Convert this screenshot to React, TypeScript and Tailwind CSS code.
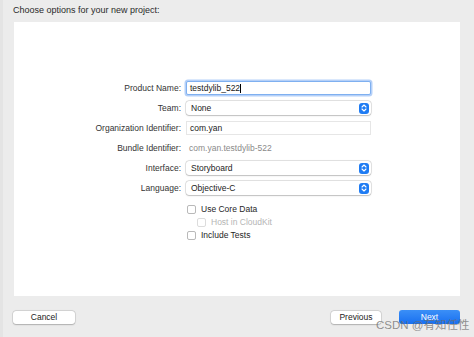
const font = { fontFamily: '"Liberation Sans", "Noto Sans CJK SC", sans-serif' };

const Stepper = () => (
	<div className="w-[10px] h-[11px] rounded-[3px] bg-[#1f7cf3] flex items-center justify-center">
		<svg width="6" height="8" viewBox="0 0 6 8" fill="none">
			<path d="M1 3 L3 1 L5 3" stroke="white" strokeWidth="1.1" strokeLinecap="round" strokeLinejoin="round" />
			<path d="M1 5 L3 7 L5 5" stroke="white" strokeWidth="1.1" strokeLinecap="round" strokeLinejoin="round" />
		</svg>
	</div>
);

const Popup = ({ value }: { value: string }) => (
	<div className="h-[14px] w-[185px] rounded-[3px] bg-white shadow-[0_0_0_0.5px_rgba(0,0,0,0.18),0_0.5px_1.5px_rgba(0,0,0,0.18)] flex items-center justify-between pl-[5px] pr-[2px] text-[8.5px] text-[#222]">
		<span>{value}</span>
		<Stepper />
	</div>
);

const Check = ({ label, disabled }: { label: string; disabled?: boolean }) => (
	<div className="h-[12px] flex items-center gap-[5px]">
		<div
			className={`w-[9px] h-[9px] rounded-[2px] bg-white border ${
				disabled ? "border-[#dcdcdc]" : "border-[#b9b9b9]"
			}`}
		/>
		<span className={`text-[8.5px] ${disabled ? "text-[#b5b5b5]" : "text-[#262626]"}`}>{label}</span>
	</div>
);

const Label = ({ text }: { text: string }) => (
	<div className="h-[14px] flex items-center justify-end text-[8.5px] text-[#333]">{text}</div>
);

const App = () => {
	return (
		<div className="w-[474px] h-[337px] bg-[#ececec] relative overflow-hidden flex flex-col border-l-[3px] border-[#e4e4e4]" style={font}>
			<div className="h-[22px] flex items-center pl-[10px] text-[9px] text-[#2a2a2a]">
				Choose options for your new project:
			</div>
			<div className="ml-[11px] w-[446px] h-[274px] bg-white pt-[59px]">
				<div className="grid grid-cols-[167px_185px] gap-x-[5px] gap-y-[6px]">
					<Label text="Product Name:" />
					<div className="h-[14px] bg-white rounded-[2px] border border-[#7fb0f0] shadow-[0_0_0_1.5px_rgba(90,150,240,0.45)] flex items-center pl-[3px] text-[8.5px] text-[#1a1a1a]">
						testdylib_522<span className="w-px h-[9px] bg-black" />
					</div>

					<Label text="Team:" />
					<Popup value="None" />

					<Label text="Organization Identifier:" />
					<div className="h-[14px] bg-white border border-[#e6e6e6] flex items-center pl-[3px] text-[8.5px] text-[#1a1a1a]">
						com.yan
					</div>

					<Label text="Bundle Identifier:" />
					<div className="h-[14px] flex items-center pl-[3px] text-[8.5px] text-[#8a8a8a]">
						com.yan.testdylib-522
					</div>

					<Label text="Interface:" />
					<Popup value="Storyboard" />

					<Label text="Language:" />
					<Popup value="Objective-C" />
				</div>
				<div className="ml-[173px] mt-[8px] flex flex-col gap-[1px]">
					<Check label="Use Core Data" />
					<div className="pl-[10px]">
						<Check label="Host in CloudKit" disabled />
					</div>
					<Check label="Include Tests" />
				</div>
			</div>
			<div className="flex items-center justify-between pl-[10px] pr-[14px] mt-[14px]">
				<button className="w-[62px] h-[13px] rounded-[3px] bg-white shadow-[0_0_0_0.5px_rgba(0,0,0,0.15),0_0.5px_1.5px_rgba(0,0,0,0.2)] text-[8.5px] text-[#222]">
					Cancel
				</button>
				<div className="flex items-center gap-[18px]">
					<button className="w-[50px] h-[13px] rounded-[3px] bg-white shadow-[0_0_0_0.5px_rgba(0,0,0,0.15),0_0.5px_1.5px_rgba(0,0,0,0.2)] text-[8.5px] text-[#222]">
						Previous
					</button>
					<button className="w-[61px] h-[14px] rounded-[3px] bg-gradient-to-b from-[#3b8ff7] to-[#176ff0] text-[8.5px] text-white">
						Next
					</button>
				</div>
			</div>
			<div className="absolute left-[373px] top-[317px] text-[11.5px] text-[rgba(110,110,110,0.75)] whitespace-nowrap">
				CSDN @有知任性
			</div>
		</div>
	);
};

export default App;
